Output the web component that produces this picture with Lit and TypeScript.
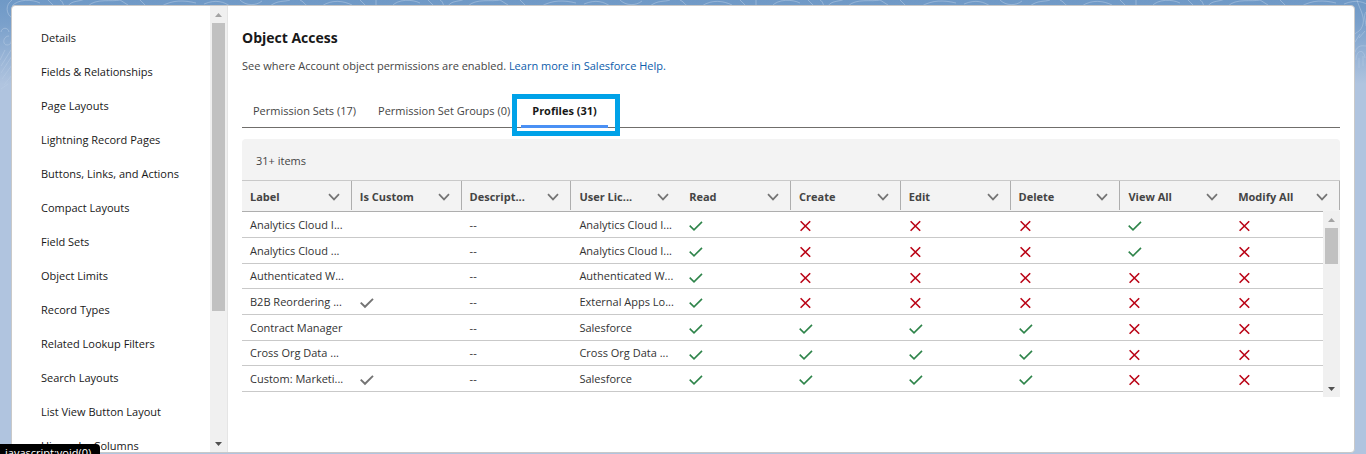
import { LitElement, html, css } from "lit";
import { customElement, state } from "lit/decorators.js";
import { classMap } from "lit/directives/class-map.js";

interface Profile {
  label: string;
  custom: boolean;
  license: string;
  marks: string;
}

const NAV = [
  "Details", "Fields & Relationships", "Page Layouts", "Lightning Record Pages",
  "Buttons, Links, and Actions", "Compact Layouts", "Field Sets", "Object Limits",
  "Record Types", "Related Lookup Filters", "Search Layouts",
  "List View Button Layout", "Hierarchy Columns",
];

const TABS = ["Permission Sets (17)", "Permission Set Groups (0)", "Profiles (31)"];

const COLUMNS = [
  { name: "Label", rule: true },
  { name: "Is Custom", rule: true },
  { name: "Descript...", rule: true },
  { name: "User Lic...", rule: false },
  { name: "Read", rule: true },
  { name: "Create", rule: true },
  { name: "Edit", rule: true },
  { name: "Delete", rule: true },
  { name: "View All", rule: false },
  { name: "Modify All", rule: true },
];

// marks: read, create, edit, delete, view all, modify all
const PROFILES: Profile[] = [
  { label: "Analytics Cloud I...", custom: false, license: "Analytics Cloud I...", marks: "ynnnyn" },
  { label: "Analytics Cloud ...", custom: false, license: "Analytics Cloud I...", marks: "ynnnyn" },
  { label: "Authenticated W...", custom: false, license: "Authenticated W...", marks: "ynnnnn" },
  { label: "B2B Reordering ...", custom: true, license: "External Apps Lo...", marks: "ynnnnn" },
  { label: "Contract Manager", custom: false, license: "Salesforce", marks: "yyyynn" },
  { label: "Cross Org Data ...", custom: false, license: "Cross Org Data ...", marks: "yyyynn" },
  { label: "Custom: Marketi...", custom: true, license: "Salesforce", marks: "yyyynn" },
];

const check = (kind: string) => html`
  <svg class="mark ${kind}" viewBox="0 0 16 12" role="img" aria-label="Yes">
    <path d="M0.7 5.6 5 9.8 13 1.9" />
  </svg>`;

const cross = html`
  <svg class="mark no" viewBox="0 0 16 12" role="img" aria-label="No">
    <path d="M1.6 1.2 11.2 10.8M11.2 1.2 1.6 10.8" />
  </svg>`;

@customElement("scroll-rail")
export class ScrollRail extends LitElement {
  static styles = css`
    :host { display: flex; flex-direction: column; width: 17px; background: #f0f0f0; }
    .arrow { display: block; flex: none; width: 17px; height: 17px; }
    .up { fill: #a3a3a3; }
    .down { fill: #505050; }
    .track { flex: 1; min-height: 0; }
    .thumb { margin: 0 2px; background: #c1c1c1; height: var(--thumb, 50%); }
  `;
  render() {
    return html`
      <svg class="arrow up" viewBox="0 0 17 17"><path d="M5 11 8.5 7 12 11z" /></svg>
      <div class="track"><div class="thumb"></div></div>
      <svg class="arrow down" viewBox="0 0 17 17"><path d="M5 7 8.5 11 12 7z" /></svg>`;
  }
}

@customElement("app-root")
export class AppRoot extends LitElement {
  @state() private active = 2;

  static styles = css`
    * { box-sizing: border-box; }
    :host {
      display: block;
      position: relative;
      box-sizing: border-box;
      height: 100vh;
      padding: 5px 11px 1px;
      overflow: hidden;
      background: linear-gradient(#6f99c6 0, #7aa0cb 24px, #b0c4df 84px, #b0c4df 100%);
      color: #181818;
      font: 11px/18px "Open Sans", "Segoe UI", sans-serif;
    }
    a { text-decoration: none; color: inherit; }
    button { font: inherit; color: inherit; background: none; border: 0; padding: 0; cursor: pointer; }
    .pattern { position: absolute; top: 0; left: 0; height: 96px; fill: none; stroke: #b9cde6; stroke-opacity: 0.5; stroke-width: 1; }
    .waves { width: 100%; }
    .edge { width: 12px; }
    .edge.end { left: auto; right: 0; }
    .card {
      position: relative;
      display: flex;
      height: 100%;
      overflow: hidden;
      background: #fff;
      border: 1px solid #c9c9c9;
      border-radius: 4px;
    }
    .side { flex: none; display: flex; width: 216px; border-right: 1px solid #e5e5e5; overflow: hidden; }
    .nav { flex: 1; min-width: 0; margin: 0; padding: 15px 0 0 29px; list-style: none; }
    .nav-link { display: block; line-height: 34px; white-space: nowrap; }
    .side-rail { --thumb: 70%; }
    .main { flex: 1; min-width: 0; padding: 22px 14px 0; }
    .title { margin: 0; font-size: 14px; line-height: 20px; font-weight: 700; }
    .lead { margin: 9px 0 0; line-height: 18px; color: #444; white-space: nowrap; }
    .help { color: #0b5cab; }
    .tabs { display: flex; margin-top: 19px; border-bottom: 1px solid #706e6b; }
    .tab { position: relative; height: 33px; padding: 0 11px; color: #444; white-space: nowrap; }
    .tab.on { font-weight: 700; color: #181818; }
    .tab.on::before { content: ""; position: absolute; left: 0; right: 0; bottom: -1px; height: 3px; background: #4a90f4; }
    .tab.on::after { content: ""; position: absolute; inset: 0 -12px -9px -9px; border: 5px solid #00a2e8; }
    .panel { position: relative; margin-top: 11px; }
    .count { padding: 13px 14px 0; height: 41px; background: #f3f3f3; border-radius: 4px 4px 0 0; color: #444; }
    .grid { width: 100%; table-layout: fixed; border-collapse: separate; border-spacing: 0; }
    .grid th { padding: 0; height: 32px; background: #f3f3f3; border-top: 1px solid #c9c9c9; border-bottom: 1px solid #aeaeae; vertical-align: top; text-align: left; color: #444; }
    .head { display: flex; align-items: center; justify-content: space-between; height: 29px; padding: 3px 11px 0 8px; border-right: 1px solid transparent; white-space: nowrap; }
    .head.rule { border-right-color: #aeaeae; }
    .menu { display: flex; }
    .chevron { width: 12px; height: 8px; fill: none; stroke: #747474; stroke-width: 1.7; }
    .grid td { height: 26px; padding: 0 0 0 8px; border-bottom: 1px solid #c9c9c9; white-space: nowrap; overflow: hidden; color: #333; }
    .grid tbody tr:nth-child(3n) td { height: 25px; }
    .mark { display: block; width: 16px; height: 12px; margin-top: 3px; fill: none; stroke-width: 1.6; }
    .ok { stroke: #2e844a; }
    .grey { stroke: #747474; stroke-width: 1.9; }
    .no { stroke: #ba0517; }
    .body-rail { position: absolute; top: 72px; right: 0; height: 186px; --thumb: 24%; }
    .status { position: absolute; left: 0; bottom: 0; width: 100px; height: 10px; padding: 0 5px; overflow: hidden; background: #000; color: #fff; border-radius: 0 4px 0 0; white-space: nowrap; }
  `;

  render() {
    return html`
      <svg class="pattern waves" aria-hidden="true">
        <defs>
          <pattern id="contour" width="380" height="6" patternUnits="userSpaceOnUse">
            <path d="M12 6C18 -1 32 -1 40 3M48 0 54 6M60 0C64 2 62 6 66 6M68 6C72 0 80 2 84 -1M88 6C96 -2 112 2 120 0L128 5M140 0 146 6M162 6C172 0 184 0 196 3M204 4C216 -1 224 2 230 6M240 0C246 6 256 6 262 1M270 6C278 0 284 2 290 0M300 0C306 3 304 6 310 6M322 6C332 -1 344 1 352 5M360 0 366 6M376 6V0" />
          </pattern>
        </defs>
        <rect width="100%" height="6" fill="url(#contour)" stroke="none" />
      </svg>
      <svg class="pattern edge" viewBox="0 0 12 96" aria-hidden="true">
        <path d="M12 0C5 5 6 14 12 18M1 32C2 27 8 27 9 32M9 36C3 36 2 45 7 45S11 40 12 38M0 60 5 50M1 66 11 50M1 73 12 56M2 79 12 65M4 85 12 75M1 89 8 84" />
      </svg>
      <svg class="pattern edge end" viewBox="0 0 12 96" aria-hidden="true">
        <path d="M3 0C5 8 11 16 9 24S2 32 1 34M12 12C9 16 12 22 12 26M1 42 6 34M5 38 11 31M1 52C4 44 9 46 12 46M2 60C2 50 10 48 11 58M5 68V58M9 66V56" />
      </svg>
      <div class="card">
        <nav class="side" aria-label="Object setup">
          <ul class="nav">
            ${NAV.map((n) => html`<li><a class="nav-link" href="#">${n}</a></li>`)}
          </ul>
          <scroll-rail class="side-rail"></scroll-rail>
        </nav>
        <main class="main">
          <h1 class="title">Object Access</h1>
          <p class="lead">See where Account object permissions are enabled. <a class="help" href="#">Learn more in Salesforce Help.</a></p>
          <div class="tabs" role="tablist">
            ${TABS.map((t, i) => html`
              <button class=${classMap({ tab: true, on: i === this.active })} role="tab"
                aria-selected=${i === this.active} @click=${() => (this.active = i)}>${t}</button>`)}
          </div>
          <section class="panel">
            <div class="count">31+ items</div>
            <table class="grid">
              <thead><tr>
                ${COLUMNS.map((c) => html`<th scope="col"><div class=${classMap({ head: true, rule: c.rule })}>
                  <span>${c.name}</span>
                  <button class="menu" aria-label="${c.name} column actions">
                    <svg class="chevron" viewBox="0 0 12 8"><path d="M1 1.2 6 6.4 11 1.2" /></svg>
                  </button></div></th>`)}
              </tr></thead>
              <tbody>
                ${PROFILES.map((p) => html`<tr>
                  <td>${p.label}</td>
                  <td>${p.custom ? check("grey") : ""}</td>
                  <td>--</td>
                  <td>${p.license}</td>
                  ${[...p.marks].map((m) => html`<td>${m === "y" ? check("ok") : cross}</td>`)}
                </tr>`)}
              </tbody>
            </table>
            <scroll-rail class="body-rail"></scroll-rail>
          </section>
        </main>
      </div>
      <div class="status">javascript:void(0)</div>`;
  }
}
